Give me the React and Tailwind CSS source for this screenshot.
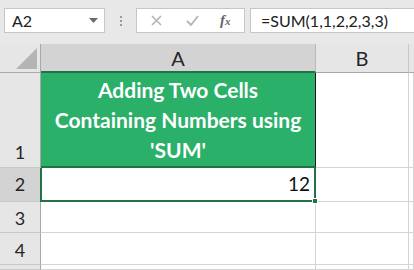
export default function App() {
  const rowHead = 'bg-[#e6e6e6] border-r border-b border-r-[#a8a8a8] border-b-[#c8c8c8] flex items-end justify-center text-[18px] text-[#262626]';
  const cell = 'bg-white border-r border-b border-[#d4d4d4]';

  return (
    <div className="w-[414px] h-[270px] overflow-hidden bg-[#e8e8e8] font-['Lato',sans-serif] text-[#202020]">
      {/* Formula bar */}
      <div className="h-[44px] flex items-start pt-[8px] pl-[4px]">
        <div className="w-[101px] h-[25px] bg-white border border-[#c6c6c6] flex items-center pl-[7px] pr-[6px]">
          <span className="flex-1 text-[16px] text-[#202020]">A2</span>
          <svg width="9" height="5" viewBox="0 0 9 5"><path d="M0 0h9L4.5 5z" fill="#6a6a6a" /></svg>
        </div>
        <div className="w-[31px] h-[25px] flex flex-col items-center justify-center gap-[2px]">
          <span className="w-[2px] h-[2px] bg-[#9a9a9a]" />
          <span className="w-[2px] h-[2px] bg-[#9a9a9a]" />
          <span className="w-[2px] h-[2px] bg-[#9a9a9a]" />
        </div>
        <div className="w-[109px] h-[25px] bg-white border border-[#c6c6c6] flex items-center">
          <svg className="ml-[14px]" width="11" height="11" viewBox="0 0 11 11">
            <path d="M1 1l9 9M10 1l-9 9" stroke="#b4b4b4" strokeWidth="1.6" />
          </svg>
          <svg className="ml-[24px]" width="13" height="11" viewBox="0 0 13 11">
            <path d="M1 6l4 4 7-9" stroke="#b4b4b4" strokeWidth="1.8" fill="none" />
          </svg>
          <span className="ml-[21px] font-['Liberation_Serif',serif] italic font-bold text-[15px] text-[#666] leading-none">
            f<span className="text-[11px]">x</span>
          </span>
        </div>
        <div className="ml-[5px] flex-1 h-[25px] bg-white border border-r-0 border-[#c6c6c6] flex items-center pl-[10px] text-[16px] text-[#202020]">
          =SUM(1,1,2,2,3,3)
        </div>
      </div>

      {/* Grid */}
      <div className="grid grid-cols-[41px_275px_93px_1fr] grid-rows-[29px_95px_34px_31px_32px_1fr] h-[226px]">
        {/* header row */}
        <div className="bg-[#e6e6e6] border-r border-b border-r-[#a8a8a8] border-b-[#a8a8a8] flex items-end justify-end pr-[3px] pb-[3px]">
          <svg width="21" height="21" viewBox="0 0 21 21"><path d="M21 0v21H0z" fill="#b4b4b4" /></svg>
        </div>
        <div className="bg-[#d3d3d3] border-r border-[#b8b8b8] border-b-2 border-b-[#217346] flex items-center justify-center text-[20px] text-[#262626]">A</div>
        <div className="bg-[#e6e6e6] border-r border-[#c8c8c8] border-b border-b-[#a8a8a8] flex items-center justify-center text-[20px] text-[#262626]">B</div>
        <div className="bg-[#e6e6e6] border-b border-b-[#a8a8a8]" />

        {/* row 1 */}
        <div className={`${rowHead} pb-[1px]`}>1</div>
        <div className="bg-[#2bb069] border-r border-r-[#1a1a1a] border-b-2 border-b-[#217346] flex flex-col items-center justify-center text-white font-bold text-[21px] leading-[30px] pt-[1px]">
          <span>Adding Two Cells</span>
          <span>Containing Numbers using</span>
          <span>'SUM'</span>
        </div>
        <div className={cell} />
        <div className={cell} />

        {/* row 2 */}
        <div className="bg-[#d3d3d3] border-r border-b border-r-[#a8a8a8] border-b-[#c8c8c8] flex items-center justify-center text-[18px] text-[#262626]">2</div>
        <div className="relative bg-white border-2 border-t-0 border-[#217346] flex items-center justify-end pr-[4px] text-[19px] text-[#111] -ml-[1px]">
          12
          <span className="absolute -right-[4px] -bottom-[4px] w-[6px] h-[6px] bg-[#217346] border border-white" />
        </div>
        <div className={cell} />
        <div className={cell} />

        {/* rows 3-5 */}
        <div className={`${rowHead} items-center`}>3</div>
        <div className={cell} />
        <div className={cell} />
        <div className={cell} />

        <div className={`${rowHead} items-center`}>4</div>
        <div className={cell} />
        <div className={cell} />
        <div className={cell} />

        <div className={rowHead} />
        <div className={cell} />
        <div className={cell} />
        <div className={cell} />
      </div>
    </div>
  );
}
